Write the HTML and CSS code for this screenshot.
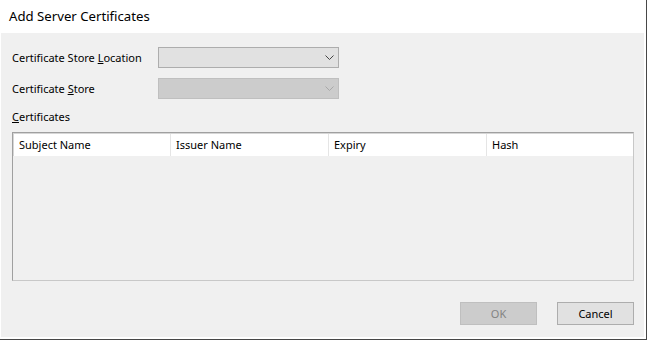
FILE: index.html
```html
<!DOCTYPE html>
<html>
<head>
<meta charset="utf-8">
<link rel="stylesheet" href="styles.css">
</head>
<body>
<div class="window">
  <div class="titlebar">Add Server Certificates</div>
  <div class="panel">
    <div class="field-row">
      <span class="field-label">Certificate Store <u>L</u>ocation</span>
      <div class="combo">
        <svg class="chev" width="9" height="5" viewBox="0 0 9 5"><polyline points="0.5,0.5 4.5,4.5 8.5,0.5" fill="none" stroke="#444" stroke-width="1"/></svg>
      </div>
    </div>
    <div class="field-row">
      <span class="field-label">Certificate <u>S</u>tore</span>
      <div class="combo disabled">
        <svg class="chev" width="9" height="5" viewBox="0 0 9 5"><polyline points="0.5,0.5 4.5,4.5 8.5,0.5" fill="none" stroke="#a8a8a8" stroke-width="1"/></svg>
      </div>
    </div>
    <div class="section-label"><u>C</u>ertificates</div>
    <div class="list">
      <div class="list-header">
        <div class="col col-first">Subject Name</div>
        <div class="col">Issuer Name</div>
        <div class="col">Expiry</div>
        <div class="col col-last">Hash</div>
      </div>
    </div>
    <div class="buttons">
      <div class="btn disabled">OK</div>
      <div class="btn">Cancel</div>
    </div>
  </div>
</div>
</body>
</html>
```
FILE: styles.css
```css
html, body {
  margin: 0;
  padding: 0;
}
body {
  background: #474747;
  width: 647px;
  height: 340px;
  font-family: "Noto Sans", "Open Sans", sans-serif;
  font-size: 11px;
  color: #000;
}
.window {
  width: 646px;
  height: 339px;
  background: #fff;
  display: flex;
  flex-direction: column;
}
.titlebar {
  height: 33px;
  line-height: 32px;
  padding-left: 9px;
  font-size: 13.2px;
  color: #000;
  box-sizing: border-box;
}
.panel {
  flex: 1;
  background: #f0f0f0;
  margin: 0 2px 2px 1px;
  padding: 14px 10px 12px 11px;
  display: flex;
  flex-direction: column;
}
.field-row {
  display: flex;
  align-items: center;
  height: 21px;
}
.field-row + .field-row {
  margin-top: 10px;
}
.field-label {
  width: 146px;
  line-height: 16px;
}
u {
  text-decoration: underline;
  text-underline-offset: 1px;
}
.combo {
  width: 181px;
  height: 21px;
  box-sizing: border-box;
  background: #e1e1e1;
  border: 1px solid #adadad;
  display: flex;
  align-items: center;
  justify-content: flex-end;
  padding-right: 4px;
}
.combo.disabled {
  background: #cccccc;
  border-color: #bfbfbf;
}
.chev {
  display: block;
}
.section-label {
  margin-top: 10px;
  height: 23px;
  line-height: 16px;
}
.list {
  height: 149px;
  box-sizing: border-box;
  border: 1px solid #a0a0a0;
  border-right-color: #c8c8c8;
  border-bottom-color: #c8c8c8;
  background: #f0f0f0;
}
.list-header {
  height: 22px;
  background: #fff;
  display: flex;
  border-top: 1px solid #d6d6d6;
  border-left: 1px solid #d6d6d6;
  box-sizing: border-box;
  height: 23px;
}
.col {
  flex: none;
  width: 158px;
  box-sizing: border-box;
  padding-left: 5px;
  line-height: 21px;
  border-left: 1px solid #e5e5e5;
}
.col-first {
  width: 156px;
  border-left: none;
}
.col-last {
  flex: 1 1 auto;
  width: auto;
}
.buttons {
  margin-top: auto;
  display: flex;
  justify-content: flex-end;
  gap: 20px;
}
.btn {
  width: 77px;
  height: 23px;
  box-sizing: border-box;
  background: #e1e1e1;
  border: 1px solid #adadad;
  text-align: center;
  line-height: 21px;
}
.btn.disabled {
  background: #cccccc;
  border-color: #bfbfbf;
  color: #838383;
}
```
